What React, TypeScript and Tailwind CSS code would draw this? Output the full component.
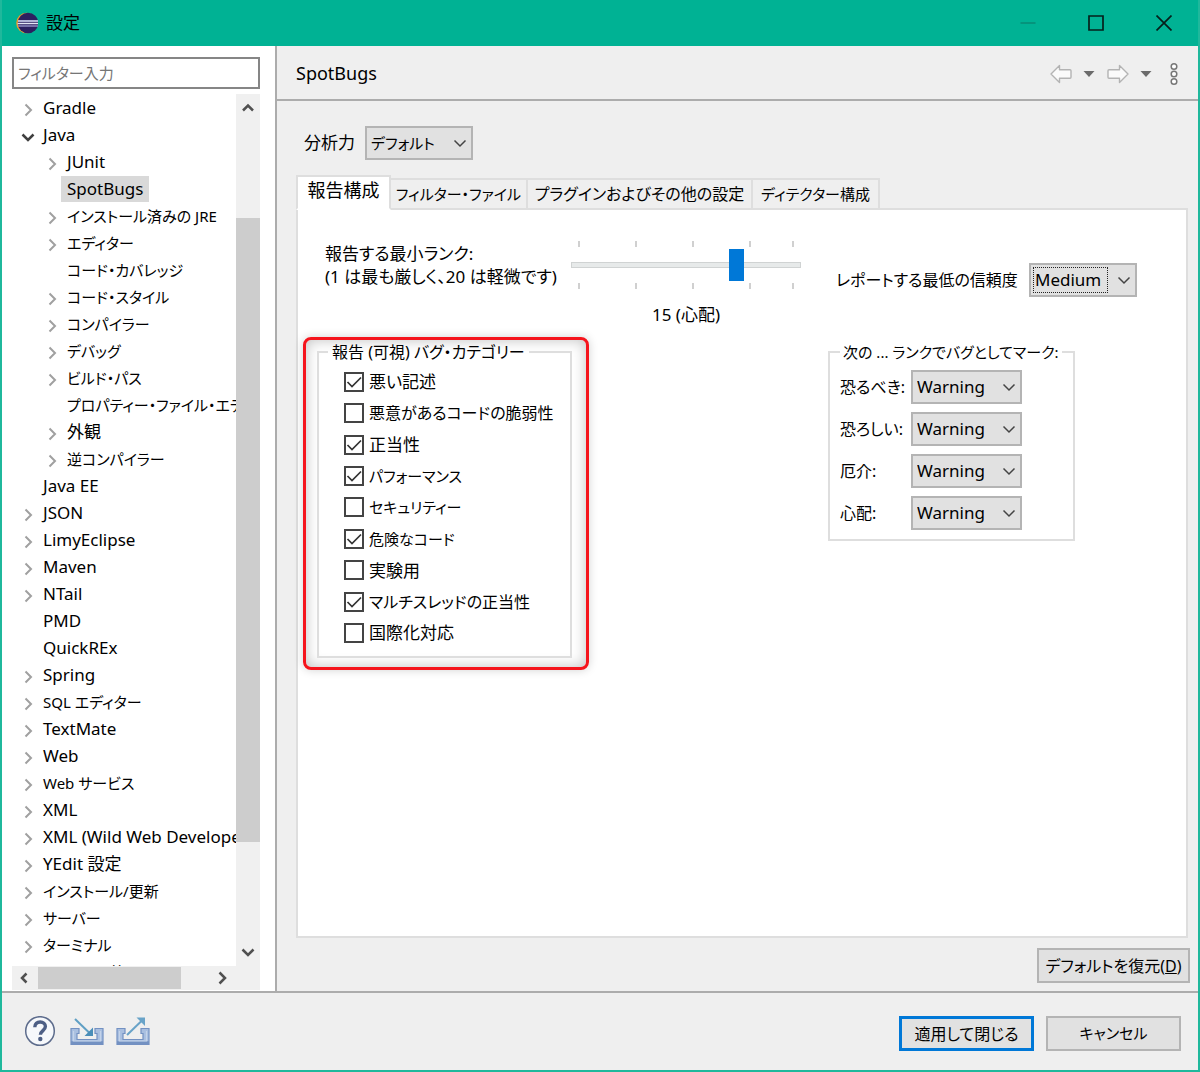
import { useState } from 'react'
import type { ReactNode } from 'react'

interface TreeItem {
  label: string
  depth: number
  state?: 'open' | 'closed'
  kana?: boolean
}

interface Category {
  id: string
  label: string
  checked: boolean
  size: string
}

// kana labels are set one step smaller so they sit evenly beside the latin ones
const treeItems: TreeItem[] = [
  { label: 'Gradle', depth: 0, state: 'closed' },
  { label: 'Java', depth: 0, state: 'open' },
  { label: 'JUnit', depth: 1, state: 'closed' },
  { label: 'SpotBugs', depth: 1 },
  { label: 'インストール済みの JRE', depth: 1, state: 'closed', kana: true },
  { label: 'エディター', depth: 1, state: 'closed', kana: true },
  { label: 'コード・カバレッジ', depth: 1, kana: true },
  { label: 'コード・スタイル', depth: 1, state: 'closed', kana: true },
  { label: 'コンパイラー', depth: 1, state: 'closed', kana: true },
  { label: 'デバッグ', depth: 1, state: 'closed', kana: true },
  { label: 'ビルド・パス', depth: 1, state: 'closed', kana: true },
  { label: 'プロパティー・ファイル・エディター', depth: 1, kana: true },
  { label: '外観', depth: 1, state: 'closed' },
  { label: '逆コンパイラー', depth: 1, state: 'closed', kana: true },
  { label: 'Java EE', depth: 0 },
  { label: 'JSON', depth: 0, state: 'closed' },
  { label: 'LimyEclipse', depth: 0, state: 'closed' },
  { label: 'Maven', depth: 0, state: 'closed' },
  { label: 'NTail', depth: 0, state: 'closed' },
  { label: 'PMD', depth: 0 },
  { label: 'QuickREx', depth: 0 },
  { label: 'Spring', depth: 0, state: 'closed' },
  { label: 'SQL エディター', depth: 0, state: 'closed', kana: true },
  { label: 'TextMate', depth: 0, state: 'closed' },
  { label: 'Web', depth: 0, state: 'closed' },
  { label: 'Web サービス', depth: 0, state: 'closed', kana: true },
  { label: 'XML', depth: 0, state: 'closed' },
  { label: 'XML (Wild Web Developer)', depth: 0, state: 'closed' },
  { label: 'YEdit 設定', depth: 0, state: 'closed' },
  { label: 'インストール/更新', depth: 0, state: 'closed', kana: true },
  { label: 'サーバー', depth: 0, state: 'closed', kana: true },
  { label: 'ターミナル', depth: 0, state: 'closed', kana: true },
  { label: 'バージョン管理 (チーム)', depth: 0, state: 'closed', kana: true },
]

const initialCategories: Category[] = [
  { id: 'bad', label: '悪い記述', checked: true, size: 'text-[17px]' },
  { id: 'malicious', label: '悪意があるコードの脆弱性', checked: false, size: 'text-[16px]' },
  { id: 'correctness', label: '正当性', checked: true, size: 'text-[17px]' },
  { id: 'performance', label: 'パフォーマンス', checked: true, size: 'text-[15px]' },
  { id: 'security', label: 'セキュリティー', checked: false, size: 'text-[15px]' },
  { id: 'dodgy', label: '危険なコード', checked: true, size: 'text-[15px]' },
  { id: 'experimental', label: '実験用', checked: false, size: 'text-[17px]' },
  { id: 'mt', label: 'マルチスレッドの正当性', checked: true, size: 'text-[16px]' },
  { id: 'i18n', label: '国際化対応', checked: false, size: 'text-[17px]' },
]

const ranks = [
  { id: 'scariest', label: '恐るべき:' },
  { id: 'scary', label: '恐ろしい:' },
  { id: 'troubling', label: '厄介:' },
  { id: 'concern', label: '心配:' },
]

const tabs = [
  { label: '報告構成', className: 'w-[95px] text-[18px]' },
  { label: 'フィルター・ファイル', className: 'w-[137px] text-[15px]' },
  { label: 'プラグインおよびその他の設定', className: 'w-[225px] text-[16px]' },
  { label: 'ディテクター構成', className: 'w-[127px] text-[15px]' },
]

function Chevron({ d, className }: { d: string; className: string }) {
  return (
    <svg viewBox="0 0 16 16" className={`w-4 h-4 shrink-0 ${className}`} fill="none" aria-hidden="true">
      <path d={d} stroke="currentColor" />
    </svg>
  )
}

const RIGHT = 'M5.5 2.5 11 8l-5.500 5.500'
const LEFT = 'M10.5 3.5 6 8l4.5 4.5'
const DOWN = 'M2.5 5.5 8 11l5.5-5.5'
const UP = 'M3 10.5 8 5.5l5 5'

function EclipseLogo() {
  return (
    <svg viewBox="0 0 24 24" className="w-6 h-6" aria-hidden="true">
      <circle cx="12.5" cy="12" r="10.300" fill="#f09a2a" />
      <circle cx="14" cy="12" r="10.300" fill="#2c2060" />
      <path d="M4 10h20M4 15h20" stroke="#8f8cc0" strokeWidth="1.500" />
      <path d="M3.500 12.500h21" stroke="#e3e6f4" strokeWidth="1.500" />
      <path d="M4 10h20" stroke="#c5c8e4" strokeWidth="1.500" />
    </svg>
  )
}

function HistoryArrow({ flip }: { flip?: boolean }) {
  return (
    <svg viewBox="0 0 22 20" className={flip ? 'w-[22px] h-5 -scale-x-100' : 'w-[22px] h-5'} aria-hidden="true">
      <path
        d="M1 10 9.500 1.500v4.300H20q1 0 1 1v6.400q0 1-1 1H9.500v4.300z"
        fill="#fafafa"
        stroke="#b3b3b3"
        strokeWidth="1.400"
        strokeLinejoin="round"
      />
    </svg>
  )
}

function Caret() {
  return (
    <svg viewBox="0 0 12 8" className="w-3 h-2" aria-hidden="true">
      <path d="M.5 1h11L6 7z" fill="#6b6b6b" />
    </svg>
  )
}

function TrayIcon({ out }: { out?: boolean }) {
  return (
    <svg viewBox="0 0 34 30" className="w-[34px] h-[30px]" fill="none" aria-hidden="true">
      <path
        d="M1 11.500h8v5H7v6h20v-6h-2v-5h8v16H1z"
        fill="#a9bfe0"
        stroke="#7391c2"
        strokeWidth="1.200"
      />
      <path d="M1 26h32" stroke="#7391c2" strokeWidth="3.500" />
      <path d="M3.500 14v10h27V14" stroke="#c4d3ea" strokeWidth="1.200" />
      {out ? (
        <>
          <path d="M11 18 26 3.500" stroke="#69a3c8" strokeWidth="2" />
          <path d="M20.500.5H29V9z" fill="#69a3c8" />
        </>
      ) : (
        <>
          <path d="M5 2 19 15.500" stroke="#5f9fc4" strokeWidth="2" />
          <path d="M23 10.500V19h-8.500z" fill="#4a8eb8" />
        </>
      )}
    </svg>
  )
}

interface ComboProps {
  id: string
  className: string
  options: string[]
  focused?: boolean
}

function Combo({ id, className, options, focused }: ComboProps) {
  return (
    <div className={`relative ${className}`}>
      <select
        id={id}
        className="appearance-none w-full h-[34px] pl-1 pr-6 bg-[#e1e1e1] border-2 border-[#b4b4b4] outline-none"
      >
        {options.map((option) => (
          <option key={option}>{option}</option>
        ))}
      </select>
      {focused && (
        <span className="absolute left-1 right-[29px] inset-y-1 border border-dotted border-[#222] pointer-events-none" />
      )}
      <Chevron d={DOWN} className="absolute right-[5px] top-[9px] stroke-[1.5] text-[#444] pointer-events-none" />
    </div>
  )
}

function PushButton({ primary, className, children }: { primary?: boolean; className: string; children: ReactNode }) {
  return (
    <button
      type="button"
      className={`h-[35px] whitespace-nowrap bg-[#e1e1e1] ${
        primary ? 'border-3 border-[#0078d7]' : 'border-2 border-[#b4b4b4]'
      } ${className}`}
    >
      {children}
    </button>
  )
}

function Ticks() {
  return (
    <div className="grid grid-cols-[5fr_5fr_5fr_4fr] h-[6px] mx-[7px]">
      <span className="border-l-2 border-[#d0d0d0]" />
      <span className="border-l-2 border-[#d0d0d0]" />
      <span className="border-l-2 border-[#d0d0d0]" />
      <span className="border-x-2 border-[#d0d0d0]" />
    </div>
  )
}

function Sidebar() {
  const [selected, setSelected] = useState('SpotBugs')

  return (
    <aside className="flex flex-col w-[275px] shrink-0 bg-white border-r-2 border-[#acacac] pl-[10px] pr-[15px] pt-[11px]">
      <input
        type="text"
        aria-label="フィルター入力"
        placeholder="フィルター入力"
        className="h-8 shrink-0 px-1 border-2 border-[#868686] text-[15px] outline-none placeholder:text-[#767676]"
      />
      <div className="flex flex-1 min-h-0 mt-[5px]">
        <ul role="tree" className="flex-1 min-w-0 overflow-hidden">
          {treeItems.map((item) => (
            <li
              key={item.label}
              role="treeitem"
              aria-selected={selected === item.label}
              onClick={() => setSelected(item.label)}
              className={`flex items-center h-[27px] whitespace-nowrap ${item.depth === 0 ? 'pl-2' : 'pl-8'}`}
            >
              <span className="w-[17px] shrink-0 pt-1">
                {item.state === 'closed' && <Chevron d={RIGHT} className="stroke-2 text-[#a0a0a0]" />}
                {item.state === 'open' && <Chevron d={DOWN} className="stroke-[2.500] text-[#404040]" />}
              </span>
              <span
                className={`px-[6px] leading-[26px] ${item.kana ? 'text-[15px]' : ''} ${
                  selected === item.label ? 'bg-[#d9d9d9]' : ''
                }`}
              >
                {item.label}
              </span>
            </li>
          ))}
        </ul>
        <div className="flex flex-col items-center w-6 bg-[#f0f0f0] py-[6px]">
          <Chevron d={UP} className="stroke-[2.500] text-[#505050]" />
          <div className="w-full h-[624px] mt-[102px] mb-auto bg-[#cdcdcd]" />
          <Chevron d={DOWN} className="stroke-[2.500] text-[#505050]" />
        </div>
      </div>
      <div className="flex items-center h-6 shrink-0 mb-px bg-[#f0f0f0] pl-1 pr-[30px]">
        <Chevron d={LEFT} className="stroke-[2.500] text-[#505050]" />
        <div className="w-[143px] h-[22px] ml-[6px] mr-auto bg-[#cdcdcd]" />
        <Chevron d={RIGHT} className="stroke-[2.500] text-[#505050]" />
      </div>
    </aside>
  )
}

function ReportPanel() {
  const [categories, setCategories] = useState(initialCategories)
  const [rank, setRank] = useState(15)

  const toggle = (id: string) => {
    setCategories(categories.map((c) => (c.id === id ? { ...c, checked: !c.checked } : c)))
  }

  return (
    <div className="flex-1 bg-white border-2 border-[#dedede] pt-[31px] pl-[5px]">
      <div className="flex items-start h-24">
        <label htmlFor="rank" className="w-[247px] pl-[22px] pt-px leading-[23px] whitespace-nowrap">
          報告する最小ランク:
          <br />
          (1 は最も厳しく、20 は軽微です)
        </label>
        <div className="w-[230px] ml-[21px]">
          <Ticks />
          <input
            id="rank"
            type="range"
            min={1}
            max={20}
            value={rank}
            onChange={(e) => setRank(Number(e.target.value))}
            className="block appearance-none w-full h-9 bg-transparent [&::-webkit-slider-runnable-track]:h-[6px] [&::-webkit-slider-runnable-track]:bg-[#e7eaea] [&::-webkit-slider-runnable-track]:border [&::-webkit-slider-runnable-track]:border-[#d0d3d3] [&::-webkit-slider-thumb]:appearance-none [&::-webkit-slider-thumb]:w-[15px] [&::-webkit-slider-thumb]:h-8 [&::-webkit-slider-thumb]:-mt-[14px] [&::-webkit-slider-thumb]:bg-[#0078d7]"
          />
          <Ticks />
          <output htmlFor="rank" className="block mt-[14px] text-center leading-6">
            {rank} (心配)
          </output>
        </div>
        <div className="flex items-center mt-[22px] ml-[35px]">
          <label htmlFor="confidence" className="w-[193px] text-[16px] whitespace-nowrap">
            レポートする最低の信頼度
          </label>
          <Combo id="confidence" className="w-[108px]" options={['Medium', 'High', 'Low']} focused />
        </div>
      </div>

      <div className="flex items-start justify-between pr-[111px]">
        <div className="w-[286px] h-[333px] pl-[11px] pr-[14px] border-3 border-[#f5141c] rounded-lg shadow-[0_0_10px_rgba(0,0,0,0.18),inset_0_0_14px_rgba(0,0,0,0.25)]">
          <fieldset className="min-w-0 h-[318px] border-2 border-[#dedede] pl-[25px]">
            <legend className="-ml-4 px-1 text-[16px] leading-6 whitespace-nowrap">報告 (可視) バグ・カテゴリー</legend>
            <ul className="flex flex-col h-[283px] mt-[2px]">
              {categories.map((category) => (
                <li key={category.id} className="flex flex-1 items-center whitespace-nowrap">
                  <span className="relative flex">
                    <input
                      id={category.id}
                      type="checkbox"
                      checked={category.checked}
                      onChange={() => toggle(category.id)}
                      className="peer appearance-none w-5 h-5 bg-white border-2 border-[#444]"
                    />
                    <svg
                      viewBox="0 0 20 20"
                      className="absolute inset-0 hidden peer-checked:block pointer-events-none"
                      fill="none"
                      aria-hidden="true"
                    >
                      <path d="m3.500 10 4.500 4.500 9-9" stroke="#333" strokeWidth="1.700" />
                    </svg>
                  </span>
                  <label htmlFor={category.id} className={`pl-[5px] ${category.size}`}>
                    {category.label}
                  </label>
                </li>
              ))}
            </ul>
          </fieldset>
        </div>

        <fieldset className="w-[247px] min-w-0 mt-[3px] border-2 border-[#dedede] pl-[10px] pb-[9px]">
          <legend className="px-[3px] text-[15px] leading-6 whitespace-nowrap">次の ... ランクでバグとしてマーク:</legend>
          <div className="grid gap-2 mt-[6px]">
            {ranks.map((r) => (
              <div key={r.id} className="flex items-center">
                <label htmlFor={r.id} className="w-[71px] text-[16px] whitespace-nowrap">
                  {r.label}
                </label>
                <Combo id={r.id} className="w-[111px]" options={['Warning', 'Error', 'Info']} />
              </div>
            ))}
          </div>
        </fieldset>
      </div>
    </div>
  )
}

export default function App() {
  const [tab, setTab] = useState(0)

  return (
    <div className="flex flex-col h-screen min-h-[700px] bg-[#efefef] border-2 border-t-0 border-[#1fb89c] text-[17px] text-black font-['Noto_Sans','Noto_Sans_CJK_JP',sans-serif] [font-feature-settings:'palt']">
      <header className="flex items-center h-[46px] shrink-0 bg-[#00b294] pl-3">
        <EclipseLogo />
        <h1 className="ml-2">設定</h1>
        <div className="flex ml-auto">
          <button type="button" aria-label="最小化" className="grid place-items-center w-[68px] h-[46px]">
            <svg viewBox="0 0 16 16" className="w-4 h-4">
              <path d="M.5 8h15" stroke="#078a75" strokeWidth="1.500" />
            </svg>
          </button>
          <button type="button" aria-label="最大化" className="grid place-items-center w-[68px] h-[46px]">
            <svg viewBox="0 0 16 16" className="w-4 h-4">
              <path d="M1 1h14v14H1z" fill="none" stroke="#06201b" strokeWidth="1.700" />
            </svg>
          </button>
          <button type="button" aria-label="閉じる" className="grid place-items-center w-[68px] h-[46px]">
            <svg viewBox="0 0 16 16" className="w-4 h-4">
              <path d="m.5.5 15 15m0-15-15 15" stroke="#06201b" strokeWidth="1.700" />
            </svg>
          </button>
        </div>
      </header>

      <div className="flex flex-1 min-h-0">
        <Sidebar />
        <main className="flex flex-col flex-1 min-w-0">
          <div className="flex items-center h-[55px] shrink-0 border-b-2 border-[#acacac] pl-[19px] pr-[19px] pt-[2px]">
            <h2 className="text-[18px]">SpotBugs</h2>
            <div className="flex items-center ml-auto">
              <button type="button" aria-label="戻る">
                <HistoryArrow />
              </button>
              <button type="button" aria-label="戻る履歴" className="ml-[11px]">
                <Caret />
              </button>
              <button type="button" aria-label="進む" className="ml-3">
                <HistoryArrow flip />
              </button>
              <button type="button" aria-label="進む履歴" className="ml-[11px]">
                <Caret />
              </button>
              <button type="button" aria-label="メニュー" className="ml-[17px]">
                <svg viewBox="0 0 10 24" className="w-[10px] h-6" fill="#fff" stroke="#777" strokeWidth="1.500">
                  <circle cx="5" cy="4.500" r="2.800" />
                  <circle cx="5" cy="12" r="2.800" />
                  <circle cx="5" cy="19.500" r="2.800" />
                </svg>
              </button>
            </div>
          </div>

          <div className="flex items-center mt-[25px] pl-[27px]">
            <label htmlFor="effort" className="w-[61px]">
              分析力
            </label>
            <Combo id="effort" className="w-[108px] text-[15px]" options={['デフォルト', '最小', '最大']} />
          </div>

          <div className="flex flex-col flex-1 min-h-0 pl-[19px] pr-[10px] pt-[15px]">
            <div role="tablist" className="relative flex items-end -mb-[2px]">
              {tabs.map((t, index) => (
                <button
                  key={t.label}
                  type="button"
                  role="tab"
                  aria-selected={tab === index}
                  onClick={() => setTab(index)}
                  className={`whitespace-nowrap border-2 border-[#dedede] ${
                    tab === index ? 'h-[35px] pb-1 bg-white border-b-white' : 'h-8 border-l-0'
                  } ${t.className}`}
                >
                  {t.label}
                </button>
              ))}
            </div>
            <ReportPanel />
          </div>

          <div className="flex justify-end shrink-0 pt-[10px] pr-2 pb-2">
            <PushButton className="w-[153px] text-[16px]">
              デフォルトを復元(<u>D</u>)
            </PushButton>
          </div>
        </main>
      </div>

      <footer className="flex items-center h-[79px] shrink-0 border-t-2 border-[#acacac] pl-[22px] pr-[17px]">
        <button type="button" aria-label="ヘルプ">
          <svg viewBox="0 0 32 32" className="w-8 h-8" fill="none" aria-hidden="true">
            <circle cx="16" cy="15" r="14.300" fill="#f6f8fb" stroke="#5d6c8c" strokeWidth="1.500" />
            <path
              d="M10.800 11.300c0-3.500 2.300-5.300 5.400-5.300 3 0 5.200 1.800 5.200 4.500 0 4-5 4.200-5 8.300"
              stroke="#4d5f85"
              strokeWidth="3.400"
            />
            <circle cx="16.300" cy="23" r="2.200" fill="#4d5f85" />
          </svg>
        </button>
        <button type="button" aria-label="インポート" className="ml-[14px]">
          <TrayIcon />
        </button>
        <button type="button" aria-label="エクスポート" className="ml-3">
          <TrayIcon out />
        </button>
        <div className="flex gap-3 ml-auto pt-1">
          <PushButton primary className="w-[135px] text-[16px]">
            適用して閉じる
          </PushButton>
          <PushButton className="w-[135px] text-[15px]">キャンセル</PushButton>
        </div>
      </footer>
    </div>
  )
}
